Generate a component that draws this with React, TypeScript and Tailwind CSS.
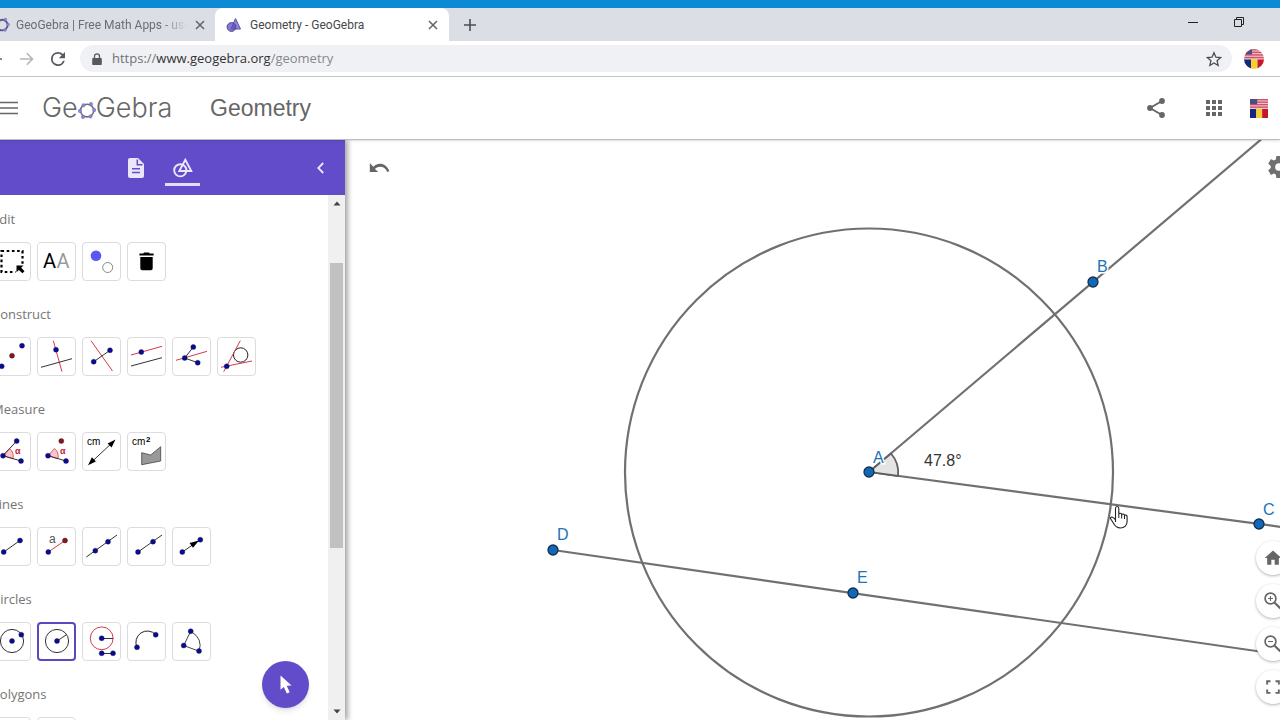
import * as React from "react";
import { ReactNode } from "react";
import clsx from "clsx";

const BLUE = "#0a0a96";
const RED = "#d43a4a";
const DARK_RED = "#8f1414";

/* ---------- drawing helpers for the tool icons ---------- */

function Dot({ x, y, fill = BLUE }: { x: number; y: number; fill?: string }) {
  return <circle cx={x} cy={y} r="2.5" fill={fill} stroke="#1a1a40" strokeWidth="0.4" />;
}

function Seg({ p, red }: { p: [number, number, number, number]; red?: boolean }) {
  return (
    <line x1={p[0]} y1={p[1]} x2={p[2]} y2={p[3]} stroke={red ? RED : "#333"} strokeWidth="1" />
  );
}

type Tool = { name: string; icon: ReactNode; selected?: boolean };
type Section = { title: string; tools: Tool[] };

const sections: Section[] = [
  {
    title: "Edit",
    tools: [
      {
        name: "Select objects",
        icon: (
          <>
            <rect x="9.5" y="9" width="21" height="21" fill="none" stroke="#000" strokeWidth="2.2" strokeDasharray="2.6 2.6" />
            <path d="M23.5 22h11v12h-11z" fill="#fff" />
            <path d="M24.5 23.5h7l-2.3 2.3 3.3 3.4-2.1 2.1-3.5-3.4-2.4 2.4z" fill="#000" />
          </>
        ),
      },
      {
        name: "Show / hide label",
        icon: (
          <g fontSize="20" fontFamily="Roboto, sans-serif">
            <text x="6" y="26" fill="#000">A</text>
            <text x="19.5" y="26" fill="#999">A</text>
          </g>
        ),
      },
      {
        name: "Show / hide object",
        icon: (
          <>
            <circle cx="14" cy="13.7" r="5.3" fill="#5b57f2" />
            <circle cx="25.7" cy="25.5" r="5" fill="#fff" stroke="#888" strokeWidth="1" />
          </>
        ),
      },
      {
        name: "Delete",
        icon: <path d="M13.3 15h12.4v11.2a2 2 0 0 1-2 2h-8.4a2 2 0 0 1-2-2zM12.4 11.4h3.8l1-1h4.6l1 1h3.8v2.2H12.4z" fill="#000" />,
      },
    ],
  },
  {
    title: "Construct",
    tools: [
      {
        name: "Midpoint or center",
        icon: (
          <>
            <Dot x={30} y={8.7} />
            <Dot x={20} y={18.7} fill={DARK_RED} />
            <Dot x={9.7} y={29.3} />
          </>
        ),
      },
      {
        name: "Perpendicular line",
        icon: (
          <>
            <Seg p={[16.3, 3.7, 25, 34.7]} red />
            <Seg p={[4, 30.3, 35, 21.7]} />
            <Dot x={19} y={12.7} />
          </>
        ),
      },
      {
        name: "Perpendicular bisector",
        icon: (
          <>
            <Seg p={[9, 3.7, 30.5, 34]} red />
            <Seg p={[11.7, 24.7, 28, 13.3]} />
            <Dot x={11.7} y={24.7} />
            <Dot x={28} y={13.3} />
          </>
        ),
      },
      {
        name: "Parallel line",
        icon: (
          <>
            <Seg p={[4, 18, 35, 9.3]} red />
            <Seg p={[4, 29, 35, 20.7]} />
            <Dot x={14.3} y={15} />
          </>
        ),
      },
      {
        name: "Angle bisector",
        icon: (
          <>
            <Seg p={[4, 23.3, 35, 14.3]} red />
            <Seg p={[12.7, 21, 21.3, 10]} />
            <Seg p={[12.7, 21, 25.7, 25.7]} />
            <Dot x={12.7} y={21} />
            <Dot x={21.3} y={10} />
            <Dot x={25.7} y={25.7} />
          </>
        ),
      },
      {
        name: "Tangents",
        icon: (
          <>
            <circle cx="23.7" cy="18" r="7.2" fill="none" stroke="#222" />
            <Seg p={[6.7, 34.7, 23.3, 3.7]} red />
            <Seg p={[4, 30.3, 35, 24]} red />
            <Dot x={9.7} y={29.3} />
          </>
        ),
      },
    ],
  },
  {
    title: "Measure",
    tools: [
      {
        name: "Angle",
        icon: (
          <>
            <path d="M11 23.7 17.5 16.5A10.5 10.5 0 0 1 21 26.8z" fill="#fbc4ca" stroke={RED} strokeWidth="0.8" />
            <Seg p={[11, 23.7, 24.7, 9]} />
            <Seg p={[11, 23.7, 29, 29]} />
            <Dot x={11} y={23.7} />
            <Dot x={24.7} y={9} />
            <Dot x={29} y={29} />
            <text x="23" y="22" fontSize="9" fontWeight="700" fill="#c8202f" fontFamily="Liberation Sans, sans-serif">α</text>
          </>
        ),
      },
      {
        name: "Angle with given size",
        icon: (
          <>
            <path d="M11 23.7 17.5 16.5A10.5 10.5 0 0 1 21 26.8z" fill="#fbc4ca" stroke={RED} strokeWidth="0.8" />
            <Seg p={[11, 23.7, 29, 29]} />
            <Dot x={11} y={23.7} />
            <Dot x={24.3} y={9} fill={DARK_RED} />
            <Dot x={29} y={29} />
            <text x="23" y="22" fontSize="9" fontWeight="700" fill="#c8202f" fontFamily="Liberation Sans, sans-serif">α</text>
          </>
        ),
      },
      {
        name: "Distance or length",
        icon: (
          <>
            <text x="5" y="13" fontSize="10" fill="#000" fontFamily="Liberation Sans, sans-serif">cm</text>
            <Seg p={[8, 31.5, 31.5, 9.5]} />
            <path d="M33.5 7.5 29.6 15.6 25.6 11.4zM6 33.3 9.9 25.2 13.9 29.4z" fill="#000" />
          </>
        ),
      },
      {
        name: "Area",
        icon: (
          <>
            <text x="5" y="13" fontSize="10" fill="#000" fontFamily="Liberation Sans, sans-serif">cm</text>
            <text x="19" y="10" fontSize="8" fontWeight="700" fill="#000" fontFamily="Liberation Sans, sans-serif">2</text>
            <path d="M14.7 20.7 23.7 23 33.7 14.7V29L14.7 32.7z" fill="#999" stroke="#444" strokeWidth="0.8" />
          </>
        ),
      },
    ],
  },
  {
    title: "Lines",
    tools: [
      {
        name: "Segment",
        icon: (
          <>
            <Seg p={[11.7, 25, 28, 13.5]} />
            <Dot x={11.7} y={25} />
            <Dot x={28} y={13.5} />
          </>
        ),
      },
      {
        name: "Segment with given length",
        icon: (
          <>
            <text x="12" y="15.5" fontSize="12" fill="#555" fontFamily="Liberation Sans, sans-serif">a</text>
            <Seg p={[11.3, 25, 28, 13.5]} red />
            <Dot x={11.3} y={25} />
            <Dot x={28} y={13.5} fill={DARK_RED} />
          </>
        ),
      },
      {
        name: "Line",
        icon: (
          <>
            <Seg p={[4.3, 30, 35, 8]} />
            <Dot x={13.3} y={23.7} />
            <Dot x={26} y={14.7} />
          </>
        ),
      },
      {
        name: "Ray",
        icon: (
          <>
            <Seg p={[11, 25, 35, 8]} />
            <Dot x={11} y={25} />
            <Dot x={26} y={14.7} />
          </>
        ),
      },
      {
        name: "Vector",
        icon: (
          <>
            <Seg p={[10.3, 25, 28.3, 12.7]} />
            <path d="M27 13.5 17.5 16 21 20.8z" fill="#000" />
            <Dot x={10.3} y={25} />
            <Dot x={28.3} y={12.7} />
          </>
        ),
      },
    ],
  },
  {
    title: "Circles",
    tools: [
      {
        name: "Circle with center",
        icon: (
          <>
            <circle cx="20" cy="19" r="11.6" fill="none" stroke="#333" />
            <Dot x={20} y={19} />
            <Dot x={29.3} y={12.7} />
          </>
        ),
      },
      {
        name: "Circle: center & radius",
        selected: true,
        icon: (
          <>
            <circle cx="20" cy="19" r="11.6" fill="none" stroke="#333" />
            <Seg p={[20, 19, 29.5, 12.7]} />
            <Dot x={20} y={19} />
          </>
        ),
      },
      {
        name: "Compass",
        icon: (
          <>
            <circle cx="19.7" cy="16.3" r="11.4" fill="none" stroke={RED} />
            <Seg p={[19.7, 16.5, 31, 16.5]} />
            <Seg p={[19.7, 31.5, 31, 31.5]} />
            <Dot x={19.7} y={16.3} />
            <Dot x={19.7} y={31.3} />
            <Dot x={31} y={31.3} />
          </>
        ),
      },
      {
        name: "Semicircle",
        icon: (
          <>
            <path d="M10 25.3A11.4 11.4 0 0 1 28.7 12.7" fill="none" stroke="#222" />
            <Dot x={10} y={25.3} />
            <Dot x={28.7} y={12.7} />
          </>
        ),
      },
      {
        name: "Circular sector",
        icon: (
          <>
            <path d="M18.7 9.2 11.7 23.5 27 29.2Q31.5 17 18.7 9.2z" fill="none" stroke="#444" />
            <Dot x={18.7} y={9.2} />
            <Dot x={11.7} y={23.5} />
            <Dot x={27} y={29} />
          </>
        ),
      },
    ],
  },
  {
    title: "Polygons",
    tools: [
      { name: "Polygon", icon: <path d="M10 30 14 12 30 15 26 31z" fill="none" stroke="#444" /> },
      { name: "Regular polygon", icon: <path d="M10 30V12H28V30z" fill="none" stroke="#444" /> },
    ],
  },
];

/* ---------- small graphics ---------- */

function Pentagon({ className, bold }: { className?: string; bold?: boolean }) {
  const pts = [
    [5.5, 4.2],
    [13, 3],
    [16.3, 9],
    [12.5, 15.5],
    [5, 16],
    [1.8, 10],
  ];
  return (
    <svg viewBox="0 0 18 19" className={className} aria-hidden="true">
      <ellipse cx="9.1" cy="9.6" rx="6.6" ry="6.3" fill="none" stroke={bold ? "#55557a" : "#707070"} strokeWidth={bold ? 2.2 : 1.6} />
      {pts.map(([x, y]) => (
        <circle key={`${x}-${y}`} cx={x} cy={y} r="1.7" fill="#8a86e0" stroke="#6560b8" strokeWidth="0.4" />
      ))}
    </svg>
  );
}

function Flags({ className }: { className?: string }) {
  return (
    <svg viewBox="0 0 20 20" preserveAspectRatio="none" className={className} aria-hidden="true">
      <rect width="20" height="11" fill="#f1c9cf" />
      {[0, 2.6, 5.2, 7.8].map((y) => (
        <rect key={y} y={y} width="20" height="1.5" fill="#cf5468" />
      ))}
      <rect width="8" height="5.5" fill="#4d4b86" />
      <rect y="10.5" width="7" height="9.5" fill="#14287d" />
      <rect x="7" y="10.5" width="6.5" height="9.5" fill="#f7cf2c" />
      <rect x="13.5" y="10.5" width="6.5" height="9.5" fill="#c8152a" />
    </svg>
  );
}

function CloseIcon() {
  return (
    <svg viewBox="0 0 10 10" className="size-2.5" aria-hidden="true">
      <path d="M1 1l8 8M9 1l-8 8" stroke="#5f6368" strokeWidth="1.5" />
    </svg>
  );
}

/* ---------- browser chrome ---------- */

function TabStrip() {
  return (
    <div className="flex h-[33px] shrink-0 items-stretch bg-[#dcdee6] font-['Roboto',sans-serif] text-xs text-[#45494d]">
      <div className="-ml-1.5 flex w-[221px] shrink-0 items-center">
        <Pentagon bold className="mr-1.5 size-4 shrink-0" />
        <span className="flex-1 overflow-hidden whitespace-nowrap text-[#6a6d72] [mask-image:linear-gradient(to_right,#000_85%,transparent)]">
          GeoGebra | Free Math Apps - use
        </span>
        <button type="button" aria-label="Close tab" className="mr-2.5 ml-2">
          <CloseIcon />
        </button>
      </div>
      <div className="flex w-[234px] shrink-0 items-center rounded-t-lg bg-white pr-[11px] pl-[11px]">
        <svg viewBox="0 0 16 16" className="mr-2 size-4" aria-hidden="true">
          <path d="M9.5 1.5 14.5 12H5z" fill="#8f86dd" stroke="#5a50a8" />
          <circle cx="5.5" cy="10" r="4.4" fill="#5b50b8" fillOpacity="0.75" stroke="#4a409c" />
        </svg>
        <span className="flex-1 whitespace-nowrap">Geometry - GeoGebra</span>
        <button type="button" aria-label="Close tab">
          <CloseIcon />
        </button>
      </div>
      <button type="button" aria-label="New tab" className="ml-[15px] flex items-center">
        <svg viewBox="0 0 12 12" className="size-3" aria-hidden="true">
          <path d="M6 0v12M0 6h12" stroke="#4a4d52" strokeWidth="1.6" />
        </svg>
      </button>
      <div className="-mr-2.5 ml-auto flex items-center gap-9 pb-1.5">
        <button type="button" aria-label="Minimize">
          <svg viewBox="0 0 10 10" className="size-2.5" aria-hidden="true">
            <path d="M0 5.5h10" stroke="#222" />
          </svg>
        </button>
        <button type="button" aria-label="Restore">
          <svg viewBox="0 0 10 10" className="size-2.5" aria-hidden="true">
            <path d="M.5 2.5h7v7h-7zM2.5 2.5v-2h7v7h-2" fill="none" stroke="#222" />
          </svg>
        </button>
        <button type="button" aria-label="Close window">
          <svg viewBox="0 0 10 10" className="size-2.5" aria-hidden="true">
            <path d="M0 0l10 10M10 0L0 10" stroke="#222" />
          </svg>
        </button>
      </div>
    </div>
  );
}

function AddressBar() {
  return (
    <div className="flex h-9 shrink-0 items-center border-b border-[#c9c9c9] bg-white">
      <button type="button" aria-label="Back" className="-ml-3 shrink-0">
        <svg viewBox="0 0 14 14" className="size-3.5" aria-hidden="true">
          <path d="M14 7H2M7 1.5L1.5 7 7 12.5" fill="none" stroke="#5f6368" strokeWidth="1.7" />
        </svg>
      </button>
      <button type="button" aria-label="Forward" className="ml-[18px] shrink-0">
        <svg viewBox="0 0 14 14" className="size-3.5" aria-hidden="true">
          <path d="M0 7h12M6.8 1.3 12.5 7l-5.7 5.7" fill="none" stroke="#b4b6b9" strokeWidth="1.6" />
        </svg>
      </button>
      <button type="button" aria-label="Reload" className="ml-[17px] shrink-0">
        <svg viewBox="4 4 16 16" className="size-3.5" aria-hidden="true">
          <path d="M17.65 6.35A7.96 7.96 0 0 0 12 4a8 8 0 1 0 7.73 10h-2.08A6 6 0 1 1 12 6c1.66 0 3.14.69 4.22 1.78L13 11h7V4z" fill="#55585c" />
        </svg>
      </button>
      <div className="mr-3 ml-[15px] flex h-[27px] flex-1 items-center rounded-full bg-[#f0f1f5] pr-2.5 pl-3">
        <svg viewBox="0 0 10 12" className="mr-2.5 h-3 w-2.5" aria-hidden="true">
          <path d="M1 5h8a.8.8 0 0 1 .8.8v5.4a.8.8 0 0 1-.8.8H1a.8.8 0 0 1-.8-.8V5.8A.8.8 0 0 1 1 5z" fill="#55585c" />
          <path d="M2.5 5.5V3.3a2.5 2.5 0 0 1 5 0v2.2" fill="none" stroke="#55585c" strokeWidth="1.3" />
        </svg>
        <a href="#geometry" className="flex-1 text-[13px] text-[#85888c]">
          <span className="text-[#6f7276]">https://</span>
          <span className="text-[#333]">www.geogebra.org</span>/geometry
        </a>
        <button type="button" aria-label="Bookmark this page">
          <svg viewBox="0 0 24 24" className="size-4" aria-hidden="true">
            <path d="M12 2.5l2.9 6.7 7.1.6-5.4 4.8 1.6 7.2-6.2-3.8-6.2 3.8 1.6-7.2L2 9.8l7.1-.6z" fill="none" stroke="#4a4d52" strokeWidth="1.9" />
          </svg>
        </button>
      </div>
      <button type="button" aria-label="Profile" className="mr-4 size-5 shrink-0 overflow-hidden rounded-full">
        <Flags className="size-full" />
      </button>
    </div>
  );
}

function AppHeader() {
  return (
    <header className="relative z-20 flex h-[63px] shrink-0 items-center border-b border-[#bdbdbd] bg-white font-['Liberation_Sans',Arial,sans-serif] text-[#666] shadow">
      <button type="button" aria-label="Menu" className="shrink-0">
        <svg viewBox="0 0 18 14" className="h-3.5 w-[18px]" aria-hidden="true">
          <path d="M0 1.5h18M0 7h18M0 12.5h18" stroke="#666" strokeWidth="1.6" />
        </svg>
      </button>
      <a
        href="#home"
        aria-label="GeoGebra"
        className="ml-6 flex w-[138px] shrink-0 items-center font-['Inter','Liberation_Sans',sans-serif] text-[27px] leading-8 font-light"
      >
        Ge
        <Pentagon className="mt-1 h-[19px] w-[18px] shrink-0" />
        Gebra
      </a>
      <h1 className="ml-[30px] text-[23px]">Geometry</h1>
      <div className="ml-auto flex items-center">
        <button type="button" aria-label="Share">
          <svg viewBox="0 0 18 20" className="h-5 w-[18px]" aria-hidden="true">
            <path d="M15 3 3 10l12 7" fill="none" stroke="#666" strokeWidth="1.9" />
            <circle cx="15" cy="3" r="2.9" fill="#666" />
            <circle cx="3" cy="10" r="2.9" fill="#666" />
            <circle cx="15" cy="17" r="2.9" fill="#666" />
          </svg>
        </button>
        <button type="button" aria-label="Apps" className="ml-10">
          <svg viewBox="0 0 18 18" className="size-[18px]" aria-hidden="true">
            {[1, 7, 13].map((y) =>
              [1, 7, 13].map((x) => <rect key={`${x}-${y}`} x={x} y={y} width="4" height="4" fill="#666" />)
            )}
          </svg>
        </button>
        <button type="button" aria-label="Account" className="mr-3 ml-[27px] h-[19px] w-[18px]">
          <Flags className="size-full" />
        </button>
      </div>
    </header>
  );
}

/* ---------- tool panel ---------- */

function ToolSection({ title, tools }: Section) {
  return (
    <section className="-ml-2 pt-3.5 pb-[9px]">
      <h2 className="text-[13px] leading-5 text-[#757575]">{title}</h2>
      <div className="mt-[13px] flex gap-1.5">
        {tools.map((tool) => (
          <button
            key={tool.name}
            type="button"
            title={tool.name}
            className={clsx(
              "size-[39px] rounded bg-white",
              tool.selected ? "border-2 border-[#5a48bf]" : "border border-[#dcdcdc]"
            )}
          >
            <svg viewBox={tool.selected ? "2 2 35 35" : "1 1 37 37"} className="size-full" aria-hidden="true">
              {tool.icon}
            </svg>
          </button>
        ))}
      </div>
    </section>
  );
}

function ToolPanel() {
  return (
    <aside className="relative z-10 flex w-[345px] shrink-0 flex-col bg-white shadow-[3px_0_5px_rgba(0,0,0,0.35)]">
      <div className="flex h-[55px] shrink-0 items-center bg-[#634cc9] pr-[21px]">
        <button type="button" aria-label="Algebra" className="ml-auto">
          <svg viewBox="0 0 16 20" className="h-5 w-4" aria-hidden="true">
            <path d="M2 0h8l6 6v12a2 2 0 0 1-2 2H2a2 2 0 0 1-2-2V2a2 2 0 0 1 2-2z" fill="#ece6fb" />
            <path d="M9.3 1.5v5.2h5.2M4 10.8h8M4 14.5h8" fill="none" stroke="#634cc9" strokeWidth="1.5" />
          </svg>
        </button>
        <button
          type="button"
          aria-label="Tools"
          className="mt-[3px] ml-[21px] flex h-[34px] w-[35px] justify-center border-b-[3px] border-[#e4dcf8] pt-1.5"
        >
          <svg viewBox="0 0 20 20" className="size-5" aria-hidden="true">
            <path d="M12.3 1.8 18.3 13H6.3z" fill="none" stroke="#ece6fb" strokeWidth="1.9" />
            <circle cx="7.3" cy="12.3" r="6.1" fill="none" stroke="#ece6fb" strokeWidth="1.9" />
          </svg>
        </button>
        <button type="button" aria-label="Collapse panel" className="ml-[117px]">
          <svg viewBox="0 0 7 12" className="h-3 w-[7px]" aria-hidden="true">
            <path d="M6.2 1 1.3 6l4.9 5" fill="none" stroke="#ece6fb" strokeWidth="1.8" />
          </svg>
        </button>
      </div>
      <div className="flex min-h-0 flex-1">
        <div className="min-w-0 flex-1 overflow-hidden">
          {sections.map((section) => (
            <ToolSection key={section.title} {...section} />
          ))}
        </div>
        <div className="flex w-[17px] flex-col items-center bg-[#f0f0f0] py-1.5">
          <svg viewBox="0 0 8 5" className="h-[5px] w-2" aria-hidden="true">
            <path d="M4 .5 7.5 4.5H.5z" fill="#444" />
          </svg>
          <div className="flex w-full flex-1 flex-col items-center pt-[57px]">
            <div className="h-[64%] w-[13px] bg-[#c1c1c1]" />
          </div>
          <svg viewBox="0 0 8 5" className="h-[5px] w-2" aria-hidden="true">
            <path d="M4 4.5 7.5.5H.5z" fill="#444" />
          </svg>
        </div>
      </div>
      <button
        type="button"
        aria-label="Move"
        className="absolute right-9 bottom-3 flex size-[47px] items-center justify-center rounded-full bg-[#634cc9] shadow-md"
      >
        <svg viewBox="0 0 12 19" className="h-[19px] w-3" aria-hidden="true">
          <path d="M.5.5v14.3l3.3-2.9 3 6.6 2.9-1.3-3-6.5 4.8-.3z" fill="#fff" />
        </svg>
      </button>
    </aside>
  );
}

/* ---------- construction ---------- */

const points = [
  { name: "A", x: 524, y: 332, lx: 528, ly: 323 },
  { name: "B", x: 748, y: 142, lx: 752, ly: 132 },
  { name: "C", x: 914, y: 384, lx: 918, ly: 375 },
  { name: "D", x: 208, y: 410, lx: 212, ly: 400 },
  { name: "E", x: 508, y: 453, lx: 512, ly: 443 },
];

function Construction() {
  return (
    <svg className="absolute inset-0 size-full font-['Liberation_Sans',Arial,sans-serif] text-base" aria-label="Construction">
      <g fill="none" stroke="#707070" strokeWidth="2.2">
        <circle cx="524" cy="332.5" r="244" />
        <path d="M524 332 939-20M524 332 962 390.4M208 410 960 518" />
      </g>
      <path d="M524 332 546 313.5A29 29 0 0 1 553 336z" fill="#e4e4e4" stroke="#606060" strokeWidth="1.8" />
      <text x="579" y="326" fill="#333">47.8°</text>
      {points.map((p) => (
        <g key={p.name}>
          <text x={p.lx} y={p.ly} fill="#1c74b8" stroke="#fff" strokeWidth="3" paintOrder="stroke">
            {p.name}
          </text>
          <circle cx={p.x} cy={p.y} r="5" fill="#1268b8" stroke="#12304d" strokeWidth="1.3" />
        </g>
      ))}
      {/* hand pointer */}
      <path
        d="M770.5 382V368.5c0-2.6 3.3-2.6 3.3 0v5.5c.5-1.2 2.7-1 2.9.6.6-1 2.6-.7 2.8.8.7-.8 2.6-.4 2.6 1.3v4.8c0 3.5-2.6 6.5-6.6 6.5-4.3 0-6-2.5-7.5-5.5l-2.7-4.3c.5-1.8 3.2-1.4 5.2 1.8z"
        fill="#fff"
        stroke="#222"
        strokeWidth="1.1"
      />
      <path d="M773.8 374v4M776.7 375v3.5M779.5 376v3" stroke="#222" />
    </svg>
  );
}

const viewButtons = [
  { name: "Standard view", icon: <path d="M10 20v-6h4v6h5v-8h3L12 3 2 12h3v8z" fill="#666" /> },
  {
    name: "Zoom in",
    icon: (
      <g fill="none" stroke="#666" strokeWidth="2">
        <circle cx="9" cy="9" r="6.5" />
        <path d="M14 14 21 21" strokeWidth="2.6" />
        <path d="M9 6v6M6 9h6" strokeWidth="1.3" />
      </g>
    ),
  },
  {
    name: "Zoom out",
    icon: (
      <g fill="none" stroke="#666" strokeWidth="2">
        <circle cx="9" cy="9" r="6.5" />
        <path d="M14 14 21 21" strokeWidth="2.6" />
        <path d="M6 9h6" strokeWidth="1.3" />
      </g>
    ),
  },
  {
    name: "Fullscreen",
    icon: <path d="M5 9V5h4M15 5h4v4M19 15v4h-4M9 19H5v-4" fill="none" stroke="#666" strokeWidth="2.3" />,
  },
];

function GraphicsView() {
  return (
    <main className="relative flex-1 overflow-hidden bg-white">
      <Construction />
      <button type="button" aria-label="Undo" className="absolute top-[22px] left-6">
        <svg viewBox="0 0 21 12" className="h-3 w-[21px]" aria-hidden="true">
          <path d="M.8 1v9h8.4L5.9 6.9C9.8 3.3 16 4 18.3 10l2-.7C17.8 1.5 9.5-.6 4.3 4.7z" fill="#666" />
        </svg>
      </button>
      <button type="button" aria-label="Settings" className="absolute top-4 -right-2.5">
        <svg viewBox="2 2 20 20" className="size-[22px]" aria-hidden="true">
          <path
            d="M19.43 12.98c.04-.32.07-.64.07-.98s-.03-.66-.07-.98l2.11-1.65c.19-.15.24-.42.12-.64l-2-3.46c-.12-.22-.39-.3-.61-.22l-2.49 1c-.52-.4-1.08-.73-1.69-.98l-.38-2.65C14.46 2.18 14.25 2 14 2h-4c-.25 0-.46.18-.49.42l-.38 2.65c-.61.25-1.17.59-1.69.98l-2.49-1c-.23-.09-.49 0-.61.22l-2 3.46c-.13.22-.07.49.12.64l2.11 1.65c-.04.32-.07.65-.07.98s.03.66.07.98l-2.11 1.65c-.19.15-.24.42-.12.64l2 3.46c.12.22.39.3.61.22l2.49-1c.52.4 1.08.73 1.69.98l.38 2.65c.03.24.24.42.49.42h4c.25 0 .46-.18.49-.42l.38-2.65c.61-.25 1.17-.59 1.69-.98l2.49 1c.23.09.49 0 .61-.22l2-3.46c.12-.22.07-.49-.12-.64zM12 15.5a3.5 3.5 0 1 1 0-7 3.5 3.5 0 0 1 0 7z"
            fill="#707070"
          />
        </svg>
      </button>
      <div className="absolute -right-2.5 bottom-4 flex flex-col gap-[9px]">
        {viewButtons.map((b) => (
          <button
            key={b.name}
            type="button"
            aria-label={b.name}
            className="flex size-[34px] items-center justify-center rounded-full bg-white shadow-[0_1px_3px_rgba(0,0,0,0.3)]"
          >
            <svg viewBox="0 0 24 24" className="size-5" aria-hidden="true">
              {b.icon}
            </svg>
          </button>
        ))}
      </div>
    </main>
  );
}

export default function App() {
  return (
    <div className="flex h-screen flex-col overflow-hidden bg-white font-['Open_Sans','Noto_Sans',sans-serif]">
      <div className="h-2 shrink-0 bg-[#0c8ad4]" />
      <TabStrip />
      <AddressBar />
      <AppHeader />
      <div className="flex min-h-0 flex-1">
        <ToolPanel />
        <GraphicsView />
      </div>
    </div>
  );
}
